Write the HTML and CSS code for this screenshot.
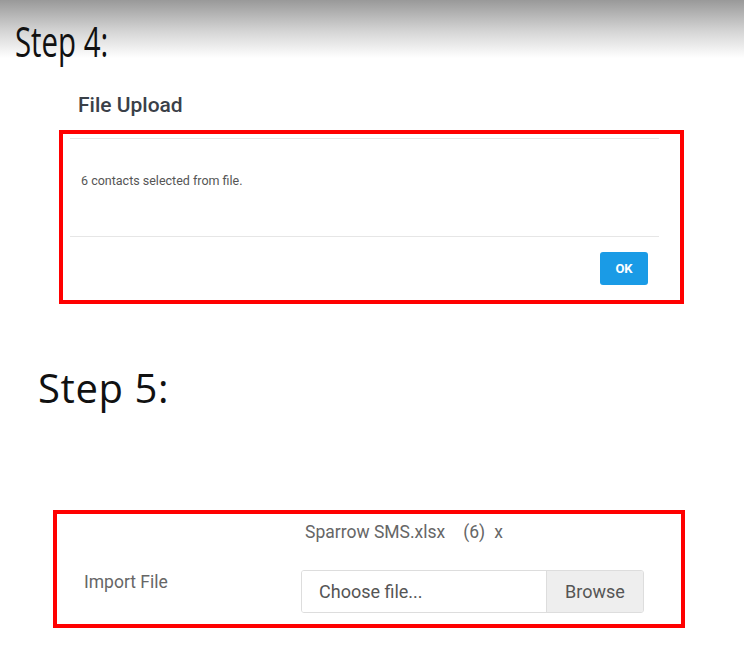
FILE: index.html
```html
<html>
    <head>
        <title>Import Contacts Steps</title>
        <link rel="stylesheet" href="styles.css">
    </head>
    <body>
        <div class="header">
            <h1 class="stepFour">Step 4:</h1>
        </div>

        <div class="sectionFour">
            <h3 class="modalTitle">File Upload</h3>
            <div class="redBox modalBox">
                <div class="modalLine"></div>
                <div class="modalBody">6 contacts selected from file.</div>
                <div class="modalLine"></div>
                <div class="modalFooter">
                    <button class="okButton">OK</button>
                </div>
            </div>
        </div>

        <h1 class="stepFive">Step 5:</h1>

        <div class="redBox importBox">
            <div></div>
            <div class="fileName">Sparrow SMS.xlsx<span class="fileCount">(6)</span><span class="fileRemove">x</span></div>
            <div class="importLabel">Import File</div>
            <div class="inputGroup">
                <span class="chooseFile">Choose file...</span>
                <span class="browseButton">Browse</span>
            </div>
        </div>
    </body>
</html>
```
FILE: styles.css
```css
body {
    margin: 0;
    background-color: #ffffff;
    font-family: Roboto, "Liberation Sans", sans-serif;
}

.header {
    height: 62px;
    padding-top: 20px;
    box-sizing: border-box;
    background: linear-gradient(to bottom, #999999 0px, #d6d6d6 32px, #ffffff 58px);
}

.stepFour {
    display: inline-block;
    margin: 0 0 0 15px;
    font-family: "Open Sans", sans-serif;
    font-weight: normal;
    font-size: 42px;
    line-height: 1;
    color: #111111;
    transform: scaleX(0.7);
    transform-origin: left center;
}

.sectionFour {
    margin-left: 59px;
    margin-top: 33px;
}

.modalTitle {
    margin: 0 0 14px 19px;
    font-size: 21px;
    font-weight: 500;
    line-height: 21px;
    color: #3a4048;
}

.redBox {
    border: 4px solid #ff0000;
    box-sizing: border-box;
}

.modalBox {
    width: 625px;
    height: 174px;
    padding-top: 4px;
}

.modalLine {
    height: 1px;
    background-color: #e6e6e6;
    margin: 0 21px 0 7px;
}

.modalBody {
    height: 97px;
    box-sizing: border-box;
    padding: 34px 0 0 18px;
    font-size: 12.5px;
    line-height: 15px;
    color: #555555;
}

.modalFooter {
    display: flex;
    justify-content: flex-end;
    padding: 15px 32px 0 0;
}

.okButton {
    width: 48px;
    height: 33px;
    border: none;
    border-radius: 3px;
    background-color: #1a9be6;
    color: #ffffff;
    font-family: Roboto, sans-serif;
    font-weight: bold;
    font-size: 13px;
    padding: 0;
}

.stepFive {
    margin: 64px 0 0 38px;
    font-family: "Open Sans", sans-serif;
    font-weight: normal;
    font-size: 40px;
    letter-spacing: 0.6px;
    line-height: 1;
    color: #111111;
}

.importBox {
    margin: 102px 0 0 53px;
    width: 632px;
    height: 118px;
    padding: 8px 0 0 27px;
    display: grid;
    grid-template-columns: 217px 343px;
    grid-template-rows: 20px 43px;
    row-gap: 28px;
}

.fileName {
    padding-left: 4px;
    font-size: 17.5px;
    line-height: 20px;
    color: #666666;
    white-space: nowrap;
}

.fileCount {
    margin-left: 18px;
}

.fileRemove {
    margin-left: 9px;
}

.importLabel {
    margin-top: 2px;
    font-size: 17.5px;
    line-height: 20px;
    color: #666666;
}

.inputGroup {
    display: flex;
    border: 1px solid #dddddd;
    border-radius: 3px;
    overflow: hidden;
    font-size: 18px;
    color: #555555;
}

.chooseFile {
    flex: 1;
    padding-left: 17px;
    line-height: 41px;
    background-color: #ffffff;
}

.browseButton {
    width: 96px;
    text-align: center;
    line-height: 41px;
    background-color: #eeeeee;
    border-left: 1px solid #dddddd;
}
```
